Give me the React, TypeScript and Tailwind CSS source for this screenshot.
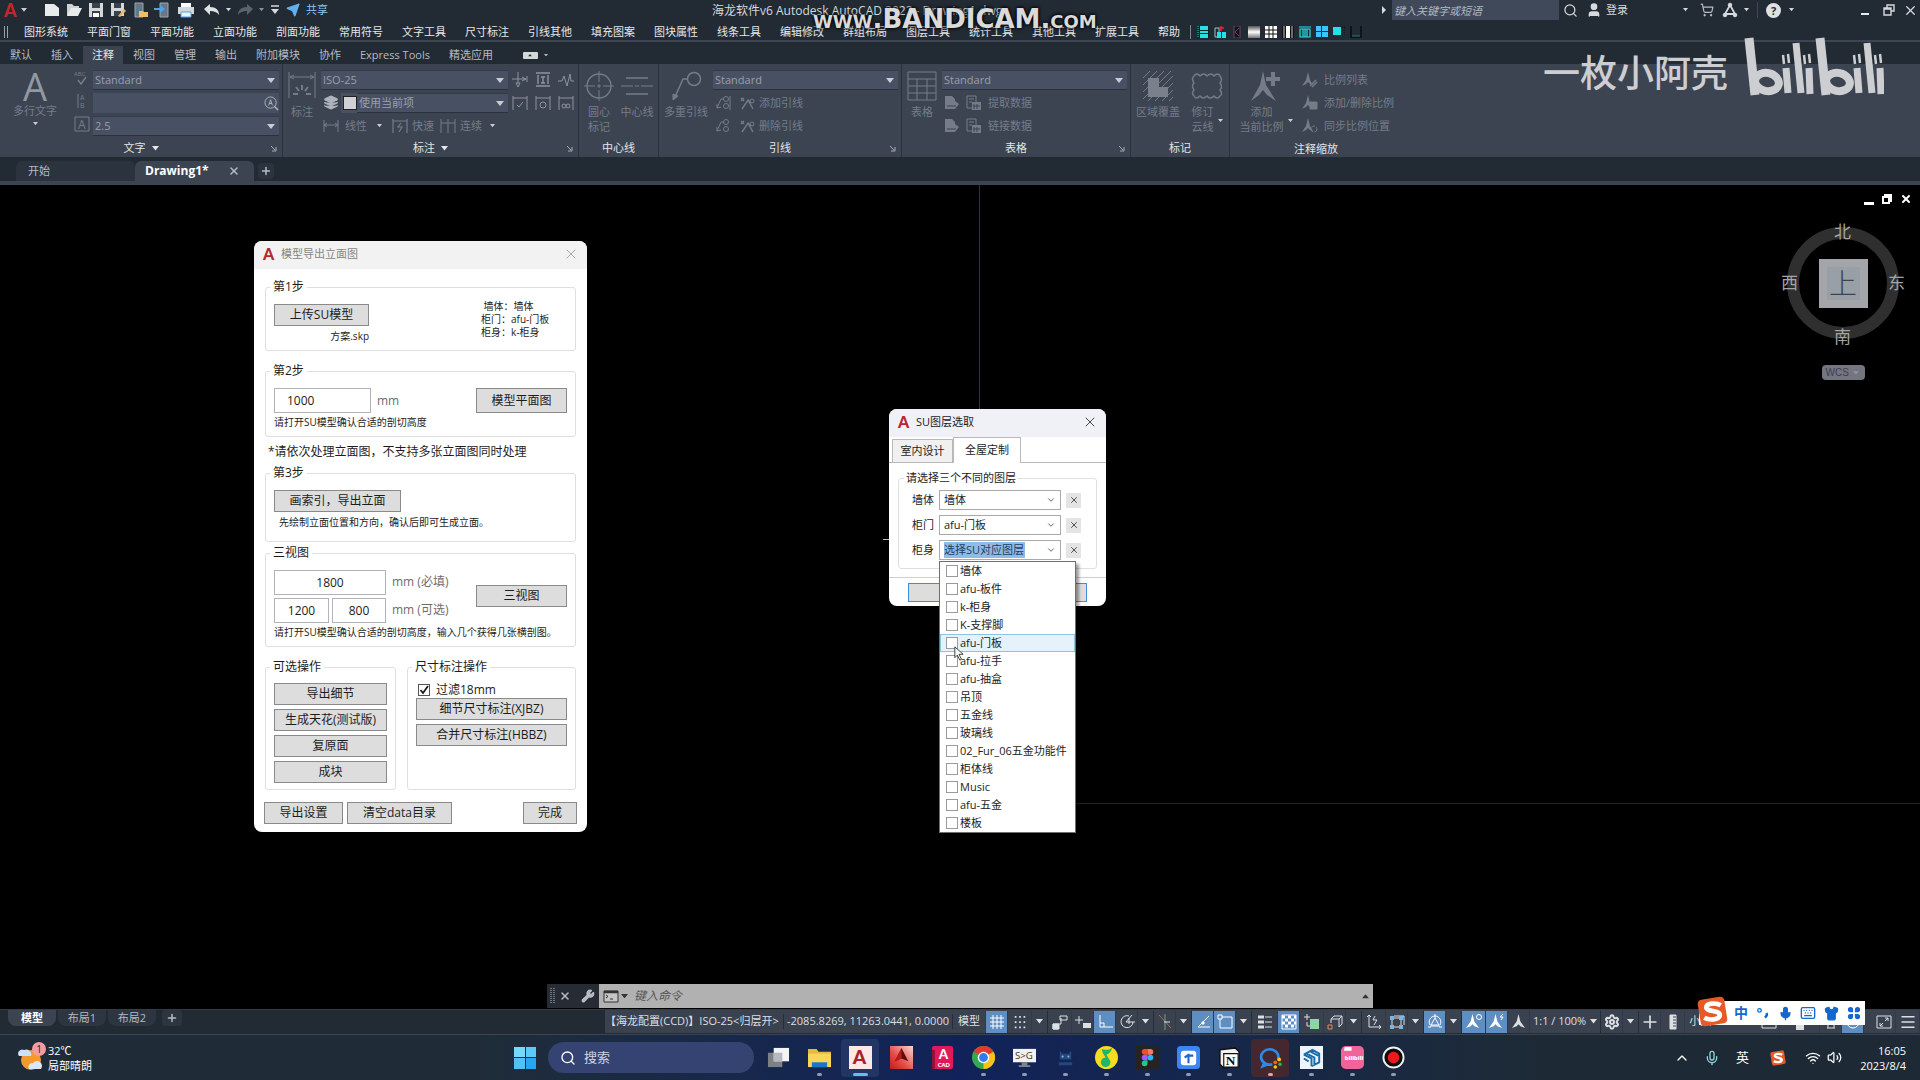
import type { ReactNode } from 'react';
import {
  Search, Wrench, ShoppingCart, User, Settings, Mic, Wifi, Volume2, ChevronUp, ChevronDown,
  X, Plus, Keyboard, Shirt, Maximize, Menu, Send, Layers,
} from 'lucide-react';

const FONT = "font-['Open_Sans','Noto_Sans_CJK_SC',sans-serif]";

const menus = [
  '图形系统', '平面门窗', '平面功能', '立面功能', '剖面功能', '常用符号', '文字工具', '尺寸标注', '引线其他', '填充图案',
  '图块属性', '线条工具', '编辑修改', '群组布局', '图层工具', '统计工具', '其他工具', '扩展工具', '帮助',
];

const ribbonTabs = ['默认', '插入', '注释', '视图', '管理', '输出', '附加模块', '协作', 'Express Tools', '精选应用'];

const layers = [
  '墙体', 'afu-板件', 'k-柜身', 'K-支撑脚', 'afu-门板', 'afu-拉手', 'afu-抽盒', '吊顶', '五金线', '玻璃线',
  '02_Fur_06五金功能件', '柜体线', 'Music', 'afu-五金', '楼板',
];

/* ---------- small helpers ---------- */

function Ico({ children, className = 'size-4', box = 16 }: { children: ReactNode; className?: string; box?: number }) {
  return (
    <svg viewBox={`0 0 ${box} ${box}`} className={`shrink-0 ${className}`} fill="none" stroke="currentColor" strokeWidth="1" aria-hidden="true">
      {children}
    </svg>
  );
}

function Caret({ className = 'w-2' }: { className?: string }) {
  return (
    <svg viewBox="0 0 8 5" className={`shrink-0 ${className}`} fill="currentColor" aria-hidden="true">
      <path d="M0 0h8L4 5z" />
    </svg>
  );
}

function Combo({ label, value, className = '' }: { label: string; value: string; className?: string }) {
  return (
    <div className={`flex h-5 items-center border-y border-b-[#2b323d] border-t-[#333b48] bg-[#485164] pr-1 ${className}`}>
      <select aria-label={label} className="h-full min-w-0 flex-1 appearance-none bg-transparent px-0.5 text-[11px] text-[#999fa9] outline-none">
        <option>{value}</option>
      </select>
      <Caret className="w-2 text-[#c9ccd1]" />
    </div>
  );
}

function Panel({ title, width, caret, arrow, children }: { title: string; width: string; caret?: boolean; arrow?: boolean; children: ReactNode }) {
  return (
    <section className={`flex shrink-0 flex-col border-r border-[#2a313c] ${width}`}>
      <div className="flex h-[76px] items-start pt-1.5 text-[#757c88]">{children}</div>
      <div className="flex h-[17px] items-center px-1 text-[11px] text-[#e3e5e8]">
        <h2 className="flex flex-1 items-center justify-center gap-1.5 pl-2">
          {title}
          {caret && <Caret className="w-[7px]" />}
        </h2>
        {arrow ? (
          <Ico className="size-2 text-[#a8adb5]" box={8}>
            <path d="M1 1l4 4M6 2v4H2" />
          </Ico>
        ) : (
          <span className="w-2" />
        )}
      </div>
    </section>
  );
}

function BigTool({ label, width, children, caret }: { label: string[]; width: string; children: ReactNode; caret?: boolean }) {
  return (
    <button className={`flex shrink-0 flex-col items-center ${width}`}>
      <span className="flex h-8 items-center justify-center">{children}</span>
      <span className="mt-0.5 flex items-end text-[11px] leading-[15px]">
        <span className="whitespace-nowrap">
          {label.map((l) => (
            <span key={l} className="block text-center">{l}</span>
          ))}
        </span>
        {caret && <Caret className="mb-3 ml-1 w-[5px] text-[#c9ccd1]" />}
      </span>
    </button>
  );
}

function ScaleMark({ className = 'size-4' }: { className?: string }) {
  return (
    <Ico className={className}>
      <path d="M8 0l2 8 5 7-5-2-2-2-2 2-5 2 5-7z" fill="currentColor" stroke="none" />
    </Ico>
  );
}

/* ---------- top of the window ---------- */

function TitleBar() {
  return (
    <header className="flex h-5 items-center text-[11px] text-[#d6d9dd]">
      <div className="flex w-[712px] shrink-0 items-center pl-1">
        <button className="flex w-7 items-center gap-1 font-['Lato'] text-lg leading-5 font-black text-[#c2262b]" aria-label="菜单">
          A <Caret className="w-1.5 text-[#c9ccd1]" />
        </button>
        <div className="ml-3 flex items-center gap-1.5">
          <Ico><path d="M1 2h9l5 4v8H1z" fill="#e8eaec" stroke="none" /></Ico>
          <Ico><path d="M1 14V2h5l2 2h5v2" fill="#cfd2d5" stroke="none" /><path d="M1 14L5 6h11l-4 8z" fill="#e8eaec" stroke="none" /></Ico>
          <Ico><path d="M1 1h14v14H1z" fill="#d5d8db" stroke="none" /><path d="M4 1h8v5H4zM4 9h8v6H4z" fill="#3a424e" stroke="none" /><path d="M5 11h6v4H5z" fill="#fff" stroke="none" /></Ico>
          <Ico><path d="M1 1h13v13H1z" fill="#d5d8db" stroke="none" /><path d="M4 1h7v5H4zM4 9h7v5H4z" fill="#3a424e" stroke="none" /><path d="M8 14l6-7 2 2-6 6z" fill="#e7b768" stroke="none" /></Ico>
          <Ico><path d="M3 1h8v14H3z" fill="#687787" stroke="#9aa5b0" /><path d="M7 9h4l1 1h4v5H7z" fill="#edbd68" stroke="none" /></Ico>
          <Ico><path d="M6 1h8v14H6z" fill="#687787" stroke="#9aa5b0" /><path d="M0 6h6V3l5 4-5 4V8H0z" fill="#4fa3e8" stroke="none" /></Ico>
          <Ico className="ml-0.5 size-4"><path d="M3 1h10v4H3z" fill="#fff" stroke="none" /><path d="M0 5h16v7H0z" fill="#d5d8db" stroke="none" /><path d="M3 10h10v5H3z" fill="#e8f4ff" stroke="#4fa3e8" /></Ico>
          <Ico className="ml-1 size-4"><path d="M6 2v3c6 0 9 3 9 8-2-3-5-4-9-4v4L0 7z" fill="#dfe2e5" stroke="none" /></Ico>
          <Caret className="w-[5px]" />
          <Ico className="size-4 text-[#59626f]"><path d="M10 2v3c-6 0-9 3-9 8 2-3 5-4 9-4v4l6-6z" fill="currentColor" stroke="none" /></Ico>
          <Caret className="w-[5px] text-[#8a919b]" />
          <Ico className="size-2.5" box={10}><path d="M1 1h8" strokeWidth="1.5" /><path d="M1 4h8L5 9z" fill="currentColor" stroke="none" /></Ico>
        </div>
        <a href="#share" className="ml-1.5 flex items-center gap-1.5 text-[#8ec5f2]">
          <Send className="size-[14px] fill-[#62b1ee] text-[#62b1ee]" />
          共享
        </a>
      </div>
      <h1 className="pt-0.5 text-xs whitespace-nowrap">海龙软件v6 Autodesk AutoCAD 2022 - Drawing1.dwg</h1>
      <div className="ml-auto flex h-full items-center pr-0.5">
        <span className="mr-1.5 border-y-4 border-l-4 border-y-transparent border-l-[#d6d9dd]" />
        <input aria-label="搜索" placeholder="键入关键字或短语" className="h-full w-[167px] bg-[#3f495a] px-0.5 text-[11px] italic outline-none placeholder:text-[#b3b8c0]" />
        <Search className="ml-1 size-[15px]" />
        <button className="ml-2 flex items-center gap-1">
          <User className="size-4 fill-current" />
          登录
        </button>
        <Caret className="ml-[55px] w-[5px]" />
        <ShoppingCart className="ml-3 size-[14px] text-[#b9bdc3]" />
        <Ico className="ml-2 size-4"><path d="M8 3l5 9H3z" strokeWidth="1.8" /><circle cx="8" cy="3" r="1.8" fill="currentColor" /><circle cx="13" cy="13" r="1.8" fill="currentColor" /><circle cx="3" cy="13" r="1.8" fill="currentColor" /></Ico>
        <Caret className="ml-1.5 w-[5px]" />
        <span className="ml-2 h-4 w-px bg-[#3f4854]" />
        <button className="ml-2 size-[15px] rounded-full bg-[#dfe2e5] text-[11px] leading-[15px] font-bold text-[#222a33]" aria-label="帮助">?</button>
        <Caret className="ml-2 w-[5px]" />
        <button aria-label="最小化" className="ml-[67px] h-2.5 w-2 border-b-2 border-[#e8eaec]" />
        <button aria-label="还原" className="ml-3.5">
          <Ico className="size-3" box={12}><path d="M4 4V1h7v6H8M1 4h7v7H1zM1 5h7" strokeWidth="1.4" /></Ico>
        </button>
        <button aria-label="关闭" className="ml-2"><X className="size-[15px]" /></button>
      </div>
    </header>
  );
}

function MenuBar() {
  return (
    <nav className="flex h-[22px] items-center border-b-2 border-[#3d4552] pt-1 pl-1 text-[11px] whitespace-nowrap text-[#e6e8ea]">
      <span className="h-3 w-1 border-x border-[#9aa0a8]" />
      <ul className="ml-4 flex gap-[19px]">
        {menus.map((m) => (
          <li key={m}><a href="#menu">{m}</a></li>
        ))}
      </ul>
      <span className="ml-2.5 h-3.5 w-px bg-[#7b838e]" />
      <div className="ml-1.5 flex gap-[5px] text-[#27e0e6]">
        <Ico className="size-3" box={12}><path d="M0 0h12v12H0z" fill="#062226" stroke="none" /><path d="M3 0h8v4H3zM3 5h8v2H3zM3 8h8v4H3z" fill="currentColor" stroke="none" /><path d="M1 0v12" strokeDasharray="1 1" /></Ico>
        <Ico className="size-3" box={12}><path d="M1 2h4v9H1z" stroke="#8cc" /><path d="M3 6h4v6H3zM8 6h4v6H8z" fill="currentColor" stroke="none" /><path d="M7 0v5M5 2h5" stroke="#e23" strokeWidth="1.6" /></Ico>
        <Ico className="size-3" box={12}><path d="M3 0h6v12H3z" fill="#161020" stroke="#6b4561" /><path d="M8 2L4 6l4 4" stroke="#6b4561" /></Ico>
        <span className="size-3 bg-linear-to-b from-[#555] via-white to-[#777]" />
        <Ico className="size-3" box={12}><path d="M0 0h12v12H0z" fill="#fff" stroke="none" /><path d="M4 0v12M8 0v12M0 4h12M0 8h12" stroke="#111" /></Ico>
        <Ico className="size-3" box={12}><path d="M0 0h12v12H0z" fill="#111" stroke="none" /><path d="M2 0v12M10 0v12" stroke="#ccc" /><path d="M4 0h4v12H4z" fill="#fff" stroke="none" /></Ico>
        <Ico className="size-3" box={12}><path d="M0 1h12M1 3h10v8H1zM4 3v8M6 3v8M8 3v8" strokeWidth="1.2" /></Ico>
        <Ico className="size-3" box={12}><path d="M0 0h5v5H0zM6 0h6v5H6zM0 6h5v5H0zM6 6h6v5H6z" fill="#38c6ff" stroke="none" /></Ico>
        <Ico className="size-3" box={12}><path d="M0 1h8v8H0z" fill="currentColor" stroke="none" /><path d="M9 1h3v9" stroke="#111" strokeDasharray="1 1" /></Ico>
        <Ico className="size-3" box={12}><path d="M1 0v11h10V0" stroke="#0b0e12" strokeWidth="1.5" /><path d="M2 10h8" stroke="#1c7f83" /></Ico>
      </div>
    </nav>
  );
}

function Ribbon() {
  return (
    <div className="bg-[#3c4452]">
      <nav className="flex h-[22px] items-end gap-px bg-[#222a33] pl-px text-[11px] whitespace-nowrap text-[#b6bbc2]">
        {ribbonTabs.map((t) => (
          <button key={t} className={`h-[18px] px-[9px] leading-[18px] ${t === '注释' ? 'bg-[#3c4452] text-[#e8eaec]' : ''}`}>{t}</button>
        ))}
        <span className="ml-5 flex h-[18px] items-center gap-1.5">
          <span className="flex h-[7px] w-[15px] items-center justify-center rounded-[1px] bg-[#d5d8db]">
            <Caret className="w-1 rotate-180 text-[#222a33]" />
          </span>
          <Caret className="w-1" />
        </span>
      </nav>

      <div className="flex h-[93px]">
        <Panel title="文字" width="w-[283px]" caret arrow>
          <button className="flex w-[70px] shrink-0 flex-col items-center">
            <span className="flex h-8 items-center text-[38px] leading-8 text-[#9298a2]">A</span>
            <span className="mt-0.5 text-[11px] leading-[14px]">多行文字</span>
            <Caret className="mt-1 w-[5px] text-[#c9ccd1]" />
          </button>
          <div className="flex w-[23px] shrink-0 flex-col items-center gap-[7px]">
            <Ico><text x="0" y="6" fontSize="6" fill="currentColor" stroke="none">ABC</text><path d="M4 10l3 4 5-7" strokeWidth="1.5" /></Ico>
            <Ico><path d="M4 1v14" /><text x="6" y="7" fontSize="7" fill="currentColor" stroke="none">A</text><text x="6" y="15" fontSize="7" fill="currentColor" stroke="none">B</text></Ico>
            <Ico><path d="M1 1h14v14H1z" /><text x="4" y="13" fontSize="12" fill="currentColor" stroke="none">A</text></Ico>
          </div>
          <div className="flex flex-1 flex-col gap-[3px] pr-[3px]">
            <Combo label="文字样式" value="Standard" />
            <div className="flex h-5 items-center bg-[#485164]">
              <input aria-label="查找文字" className="h-full min-w-0 flex-1 bg-transparent px-1 text-[11px] outline-none" />
              <Ico className="size-[15px] text-[#b0b5bd]"><circle cx="7" cy="7" r="6" /><path d="M11 11l4 4" strokeWidth="1.6" /><path d="M5 10l2-6 2 6M5.500 8h3" /></Ico>
            </div>
            <Combo label="文字高度" value="2.5" />
          </div>
        </Panel>

        <Panel title="标注" width="w-[296px]" caret arrow>
          <BigTool label={['标注']} width="w-[38px]">
            <Ico className="size-8" box={32}><path d="M3 2v26M29 2v26M4 7h24M4 7l4-2M4 7l4 2M28 7l-4-2M28 7l-4 2" /><path d="M16 15v5M10 17l3 4M22 17l-3 4M7 24h5M20 24h5" strokeWidth="2" /></Ico>
          </BigTool>
          <div className="flex flex-1 flex-col gap-[3px]">
            <Combo label="标注样式" value="ISO-25" />
            <div className="flex">
              <Layers className="mt-0.5 w-5 shrink-0 text-[#aeb3bb]" size={15} fill="currentColor" />
              <div className="flex min-w-0 flex-1 items-center bg-[#485164] pl-0.5">
                <span className="h-3.5 w-3.5 shrink-0 border border-[#222] bg-[#d0d2d6]" />
                <Combo label="标注图层" value="使用当前项" className="min-w-0 flex-1 border-0" />
              </div>
            </div>
            <div className="flex h-5 items-center text-[11px]">
              <Ico className="mx-0.5 size-4"><path d="M1 2v12M15 2v12M1 7h14M1 7l3-2M1 7l3 2M15 7l-3-2M15 7l-3 2" /></Ico>
              <span className="mx-1">线性</span>
              <Caret className="mx-1.5 w-[5px] text-[#c9ccd1]" />
              <Ico className="mx-1 size-4"><path d="M1 1v14M15 1v14M1 3h14M9 5L6 9h4l-3 5" strokeWidth="1.2" /></Ico>
              <span className="mr-1.5">快速</span>
              <Ico className="mr-1 size-4"><path d="M1 1v14M8 1v14M15 1v14M1 5h14" /></Ico>
              <span>连续</span>
              <Caret className="ml-2 w-[5px] text-[#c9ccd1]" />
            </div>
          </div>
          <div className="grid w-[70px] shrink-0 grid-cols-3 justify-items-center gap-y-[7px] pt-0.5 text-[#8e949e]">
            <Ico><path d="M6 0v11M0 7h14M6 11l-2 0 2 4 2-4zM10 5l4 2-4 2M15 4v6" /></Ico>
            <Ico><path d="M1 1h14M1 14h14M3 3v9M13 3v9M6 5h4M8 5v6M6 11h4" strokeWidth="1.4" /></Ico>
            <Ico><path d="M0 9h4l2-5 3 10 3-12 1 7h3" /></Ico>
            <Ico><path d="M1 1v14M15 1v14M1 3h14M5 10l2 2 4-5" /></Ico>
            <Ico><path d="M1 1v14M15 1v14M1 3h14" /><circle cx="8" cy="10" r="3" /></Ico>
            <Ico><path d="M1 1v14M15 1v14M1 3h14" /><circle cx="6" cy="11" r="2" /><circle cx="10" cy="11" r="2" /></Ico>
          </div>
        </Panel>

        <Panel title="中心线" width="w-20">
          <BigTool label={['圆心', '标记']} width="w-10">
            <Ico className="size-8" box={32}><circle cx="16" cy="16" r="12" strokeWidth="1.4" /><path d="M16 1v30M1 16h30" strokeDasharray="11 2 4 2" /></Ico>
          </BigTool>
          <BigTool label={['中心线']} width="w-9">
            <Ico className="size-8" box={32}><path d="M5 8h22M5 24h22" strokeWidth="1.4" /><path d="M0 16h12M14 16h4M20 16h12" /></Ico>
          </BigTool>
        </Panel>

        <Panel title="引线" width="w-[243px]" arrow>
          <BigTool label={['多重引线']} width="w-[54px]">
            <Ico className="size-8" box={32}><circle cx="24" cy="9" r="6.500" strokeWidth="1.5" /><path d="M17 9h-4L5 27" strokeWidth="1.5" /><path d="M3 30l0-6 5 2z" fill="currentColor" /></Ico>
          </BigTool>
          <div className="flex flex-1 flex-col gap-[3px] pr-[3px] text-[11px]">
            <Combo label="引线样式" value="Standard" />
            {['添加引线', '删除引线'].map((t) => (
              <div key={t} className="flex h-5 items-center gap-2 pl-0.5">
                <Ico><path d="M2 13L6 4h3M2 13l0-4M2 13l4-1" /><circle cx="11" cy="4" r="2.500" /><circle cx="11" cy="11" r="2.500" />{t === '添加引线' && <path d="M15 1v14" />}</Ico>
                <Ico><path d="M2 3l3 3M5 3L2 6M3 14L9 5l5 9M9 5l3 3" strokeWidth="1.4" /><circle cx="13" cy="6" r="2" /></Ico>
                <button className="-ml-1">{t}</button>
              </div>
            ))}
          </div>
        </Panel>

        <Panel title="表格" width="w-[229px]" arrow>
          <BigTool label={['表格']} width="w-10">
            <Ico className="size-8" box={32}><path d="M2 2h28v28H2zM2 9h28M2 16h28M2 23h28M11 9v21M21 9v21" /></Ico>
          </BigTool>
          <div className="flex flex-1 flex-col gap-[3px] pr-[3px] text-[11px]">
            <Combo label="表格样式" value="Standard" />
            {['提取数据', '链接数据'].map((t) => (
              <div key={t} className="flex h-5 items-center gap-1.5 pl-0.5">
                <Ico><path d="M1 1h7l3 3v2l4 3-4 5H1z" fill="currentColor" stroke="none" /><path d="M3 11h9" stroke="#3c4452" /></Ico>
                <Ico><path d="M1 1h9v12H1zM3 4h5M3 7h3" /><path d="M6 7h9v8H6z" fill="currentColor" stroke="none" /><path d="M8 9v5M11 9v5M7 11h7" stroke="#3c4452" /></Ico>
                <button>{t}</button>
              </div>
            ))}
          </div>
        </Panel>

        <Panel title="标记" width="w-[99px]">
          <BigTool label={['区域覆盖']} width="w-[54px]">
            <Ico className="size-8" box={32}><path d="M1 8l7-7M1 15L15 1M1 22L22 1M1 29L29 1M6 31L31 6M13 31l18-18M20 31l11-11M27 31l4-4" /><path d="M6 8h11v9h9v10H6z" fill="#7b818c" stroke="none" /></Ico>
          </BigTool>
          <BigTool label={['修订', '云线']} width="w-11" caret>
            <Ico className="size-8" box={32}><path d="M3 6q3-4 6 0 4-4 7 0 4-4 7 0 4-4 6 0 3 4 0 7 3 4 0 7 3 4 0 6-3 4-6 0-4 4-7 0-4 4-7 0-4 4-6 0-3-3 0-6-3-4 0-7-3-4 0-7z" strokeWidth="1.4" /></Ico>
          </BigTool>
        </Panel>

        <section className="flex w-[172px] shrink-0 flex-col">
          <div className="flex h-[76px] items-start pt-1.5 text-[#757c88]">
            <BigTool label={['添加', '当前比例']} width="w-[72px]" caret>
              <Ico className="size-8" box={32}><path d="M13 1l3 14 10 16-9-6-4-5-4 5-8 6 9-16z" fill="currentColor" stroke="none" /><path d="M23 2v14M16 9h14" strokeWidth="4" /></Ico>
            </BigTool>
            <div className="flex flex-col gap-[3px] text-[11px] whitespace-nowrap">
              {['比例列表', '添加/删除比例', '同步比例位置'].map((t) => (
                <button key={t} className="flex h-5 items-center gap-1.5">
                  <Ico>
                    <path d="M6 0l2 8 3 5-3-1-2-2-2 2-4 2 4-6z" fill="currentColor" stroke="none" />
                    {t === '比例列表' && <path d="M8 14l6-6M10 15l5-5" strokeWidth="1.5" />}
                    {t === '添加/删除比例' && <path d="M8 7h7v7H8zM8 9h7M8 12h7" fill="currentColor" />}
                    {t === '同步比例位置' && <circle cx="12" cy="11" r="3" strokeDasharray="4 1.500" />}
                  </Ico>
                  {t}
                </button>
              ))}
            </div>
          </div>
          <h2 className="h-[17px] text-center text-[11px] leading-[17px] text-[#e3e5e8]">注释缩放</h2>
        </section>
      </div>
    </div>
  );
}

function FileTabs() {
  return (
    <nav className="flex h-7 items-end border-b-4 border-[#3c4452] bg-[#222a33] pl-4 text-[11px] text-[#b6bbc2]">
      <button className="h-5 w-[119px] rounded-t-md bg-[#2b333f] px-3 text-left">开始</button>
      <div className="flex h-5 w-[119px] items-center justify-between rounded-t-md bg-[#3c4452] pr-3.5 pl-2.5 text-xs font-bold text-white">
        Drawing1*
        <button aria-label="关闭图形"><X className="size-3 text-[#b6bbc2]" strokeWidth={3} /></button>
      </div>
      <button aria-label="新图形" className="mb-0.5 ml-1 flex size-4 items-center justify-center rounded-sm bg-[#2b333f]"><Plus className="size-3" strokeWidth={3} /></button>
    </nav>
  );
}

/* ---------- dialogs on the drawing ---------- */

function Btn({ children, className = '' }: { children: ReactNode; className?: string }) {
  return (
    <button className={`h-[22px] border border-[#8a8a8a] bg-[#dddddd] text-xs leading-5 whitespace-nowrap text-[#1c1c1c] ${className}`}>{children}</button>
  );
}

function Num({ label, value, className }: { label: string; value: string; className: string }) {
  return <input aria-label={label} defaultValue={value} className={`h-[25px] border border-[#b0b3b8] bg-white text-xs text-[#1c1c1c] outline-none ${className}`} />;
}

function Group({ title, className = '', children }: { title: string; className?: string; children: ReactNode }) {
  return (
    <fieldset className={`min-w-0 rounded-[3px] border border-[#dfdfdf] ${className}`}>
      <legend className="-ml-1 px-[3px] text-xs leading-4">{title}</legend>
      {children}
    </fieldset>
  );
}

function ExportDialog() {
  return (
    <section className="absolute top-14 left-[254px] w-[333px] overflow-hidden rounded-lg bg-white text-xs text-[#1c1c1c]">
      <header className="flex h-7 items-center bg-[#f2f2f2] pr-2 pb-0.5 pl-[9px] text-[#858585]">
        <span className="w-[18px] font-['Lato'] text-base leading-5 font-black text-[#b7272d]">A</span>
        <h2 className="text-[11px]">模型导出立面图</h2>
        <button aria-label="关闭" className="ml-auto"><X className="size-4" strokeWidth={1} /></button>
      </header>

      <div className="px-[11px] pt-2.5 pb-2">
        <Group title="第1步" className="h-[72px] px-2">
          <div className="flex justify-between pt-[5px]">
            <div className="mt-1 flex flex-col">
              <Btn className="w-[95px]">上传SU模型</Btn>
              <span className="mt-0.5 text-right text-[10px] leading-4">方案.skp</span>
            </div>
            <p className="w-[86px] text-[10px] leading-[13px]">
              &nbsp;墙体：墙体<br />柜门：afu-门板<br />柜身：k-柜身
            </p>
          </div>
        </Group>

        <Group title="第2步" className="mt-3 h-[74px] px-2">
          <div className="flex items-center pt-[9px]">
            <Num label="剖切高度" value="1000" className="w-[97px] pl-3" />
            <span className="ml-1.5 text-[#6d6d6d]">mm</span>
            <Btn className="ml-auto h-[25px] w-[91px]">模型平面图</Btn>
          </div>
          <p className="mt-px text-[10px] leading-4">请打开SU模型确认合适的剖切高度</p>
        </Group>

        <p className="mt-[7px] pl-[3px] leading-4 whitespace-nowrap">*请依次处理立面图，不支持多张立面图同时处理</p>

        <Group title="第3步" className="mt-[5px] h-[77px] px-2">
          <Btn className="mt-[9px] block w-[127px]">画索引，导出立面</Btn>
          <p className="mt-0.5 pl-[5px] text-[10px] leading-4">先绘制立面位置和方向，确认后即可生成立面。</p>
        </Group>

        <Group title="三视图" className="mt-[3px] h-[102px] px-2">
          <div className="flex items-center pt-[7px]">
            <div className="flex w-28 flex-col gap-[3px]">
              <Num label="高度一" value="1800" className="w-full text-center" />
              <div className="flex gap-[3px]">
                <Num label="高度二" value="1200" className="w-[55px] text-center" />
                <Num label="高度三" value="800" className="w-[54px] text-center" />
              </div>
            </div>
            <div className="ml-1.5 text-[#6d6d6d]">
              <p className="leading-7">mm (必填)</p>
              <p className="leading-7">mm (可选)</p>
            </div>
            <Btn className="ml-auto w-[91px]">三视图</Btn>
          </div>
          <p className="text-[10px] leading-4 whitespace-nowrap">请打开SU模型确认合适的剖切高度，输入几个获得几张横剖图。</p>
        </Group>

        <div className="mt-3 flex gap-[11px]">
          <Group title="可选操作" className="h-[131px] w-[131px] px-2">
            <div className="flex flex-col gap-1 pt-2">
              <Btn>导出细节</Btn>
              <Btn>生成天花(测试版)</Btn>
              <Btn>复原面</Btn>
              <Btn>成块</Btn>
            </div>
          </Group>
          <Group title="尺寸标注操作" className="h-[131px] flex-1 px-2">
            <label className="mt-[7px] flex items-center gap-1.5 leading-4">
              <span className="relative ml-0.5 size-3">
                <input type="checkbox" defaultChecked className="peer block size-3 appearance-none border border-[#555] bg-white" />
                <Ico className="pointer-events-none absolute inset-0 size-3" box={12}><path d="M2.500 6l2.500 3 5-7" strokeWidth="1.8" /></Ico>
              </span>
              过滤18mm
            </label>
            <div className="flex flex-col gap-1">
              <Btn>细节尺寸标注(XJBZ)</Btn>
              <Btn>合并尺寸标注(HBBZ)</Btn>
            </div>
          </Group>
        </div>

        <footer className="-mx-px mt-3 flex gap-1">
          <Btn className="w-[79px]">导出设置</Btn>
          <Btn className="w-[105px]">清空data目录</Btn>
          <Btn className="ml-auto w-[54px]">完成</Btn>
        </footer>
      </div>
    </section>
  );
}

function LayerField({ label, value, selected }: { label: string; value: string; selected?: boolean }) {
  return (
    <div className="flex h-5 items-center">
      <label htmlFor={label} className="w-[27px] shrink-0">{label}</label>
      <div className="flex h-5 w-[122px] items-center justify-between border border-[#a9a9a9] bg-white px-1">
        <select id={label} className={`h-4 appearance-none text-[11px] leading-4 outline-none ${selected ? 'bg-[#8fbbe6] text-[#1d3f66]' : 'flex-1'}`}>
          <option>{value}</option>
        </select>
        <ChevronDown className="size-2.5 shrink-0 text-[#444]" />
      </div>
      <button aria-label={`清除${label}`} className="ml-[5px] flex size-[15px] items-center justify-center bg-[#e4e4e4]"><X className="size-2.5 text-[#333]" /></button>
    </div>
  );
}

function LayerDialog() {
  return (
    <>
      <section className="absolute top-56 left-[889px] w-[217px] overflow-hidden rounded-lg bg-white text-[11px] text-[#1c1c1c]">
        <header className="flex h-7 items-center bg-[#eff1f7] pr-2 pb-0.5 pl-[9px]">
          <span className="w-[18px] font-['Lato'] text-base leading-5 font-black text-[#b7272d]">A</span>
          <h2>SU图层选取</h2>
          <button aria-label="关闭" className="ml-auto"><X className="size-4" strokeWidth={1.2} /></button>
        </header>
        <div className="flex h-[26px] items-end border-b border-[#b9b9b9] px-[3px]">
          <button className="h-[23px] w-[61px] border border-b-0 border-[#b9b9b9] bg-[#f0f0f0]">室内设计</button>
          <button className="-mb-px h-[26px] w-[68px] border border-b-0 border-[#b9b9b9] bg-white">全屋定制</button>
        </div>
        <fieldset className="mx-[9px] mt-[7px] h-[99px] rounded-[3px] border border-[#dfdfdf] pl-[13px]">
          <legend className="-ml-2 px-0.5 leading-4">请选择三个不同的图层</legend>
          <div className="flex flex-col gap-[5px] pt-1">
            <LayerField label="墙体" value="墙体" />
            <LayerField label="柜门" value="afu-门板" />
            <LayerField label="柜身" value="选择SU对应图层" selected />
          </div>
        </fieldset>
        <footer className="mt-2 border-t border-[#cfcfcf] px-[19px] pt-[5px] pb-1">
          <button aria-label="确定" className="block h-[19px] w-full border border-[#3f8fd0] bg-[#dddddd]" />
        </footer>
      </section>

      <ul className="absolute top-[376px] left-[939px] w-[137px] border border-[#6e6e6e] bg-white text-[11px] text-[#1c1c1c] shadow-[3px_3px_3px_#00000066]">
        {layers.map((l) => (
          <li key={l} className={`h-[18px] border ${l === 'afu-门板' ? 'border-[#8cc3dd] bg-[#e3f2fb]' : 'border-transparent'}`}>
            <label className="flex h-4 items-center gap-0.5 pl-[5px] whitespace-nowrap">
              <input type="checkbox" className="size-3 appearance-none border border-[#9a9a9a] bg-white" />
              {l}
            </label>
          </li>
        ))}
      </ul>

      <svg viewBox="0 0 12 18" className="absolute top-[461px] left-[954px] h-[15px] w-2.5" aria-hidden="true">
        <path d="M1 1v13l3-3 3 6 2-1-3-6h5z" fill="#fff" stroke="#222" />
      </svg>
    </>
  );
}

function ViewCube() {
  return (
    <>
      <div className="absolute top-2 right-2 flex items-center gap-2 text-white">
        <button aria-label="最小化图形" className="mt-2 h-[3px] w-2.5 bg-current" />
        <button aria-label="还原图形"><Ico className="size-2.5" box={10}><path d="M3 2V1h6v6H8M1 3h6v6H1z" strokeWidth="2" /></Ico></button>
        <button aria-label="关闭图形窗口"><X className="size-3" strokeWidth={4} /></button>
      </div>
      <div className="absolute top-9 right-[15px] flex w-[124px] flex-col items-center text-[17px] leading-6 text-[#a5a5a5]">
        <div className="relative flex h-[124px] w-full items-center justify-between">
          <span className="absolute inset-[6px] rounded-full border-[12px] border-[#2f2f2f]" />
          <span className="absolute -top-px left-[53px]">北</span>
          <span className="absolute -bottom-1 left-[53px]">南</span>
          <span className="relative">西</span>
          <button className="relative flex size-[49px] items-center justify-center border-8 border-[#a3a5a8] bg-[#989fa6] text-[28px] leading-8 font-light text-[#3e434b]">上</button>
          <span className="relative">东</span>
        </div>
        <button className="mt-5 flex h-[15px] w-[43px] items-center gap-1 rounded bg-[#73757f] pl-1 font-['Liberation_Sans'] text-[10px] leading-[15px] text-[#3c3d52]">
          WCS <Caret className="w-1.5 text-[#8d90a0]" />
        </button>
      </div>
    </>
  );
}

/* ---------- bottom bars ---------- */

function CommandLine() {
  return (
    <div className="absolute bottom-px left-[547px] flex h-6 w-[826px] items-center bg-[#262b34] text-[#b9bdc3]">
      <Ico><path d="M4 0v16M7 0v16" strokeDasharray="1 1" /></Ico>
      <button aria-label="关闭命令行" className="-ml-1"><X className="size-3" strokeWidth={3} /></button>
      <Wrench className="ml-2.5 size-3.5 fill-current" />
      <div className="ml-1 flex h-full flex-1 items-center bg-[#b1b1b1] pr-1 pl-1 text-[#333]">
        <Ico><path d="M1 3h14v11H1z" fill="#c6c6c6" /><path d="M1 4h14" strokeWidth="2.500" /><path d="M3 7l2 1.500L3 10M7 11h3" /></Ico>
        <Caret className="ml-0.5 w-[7px]" />
        <input aria-label="命令" placeholder="键入命令" className="ml-1.5 flex-1 bg-transparent text-xs italic outline-none placeholder:text-[#555]" />
        <Caret className="w-[7px] rotate-180" />
      </div>
    </div>
  );
}

function Cell({ children, on, w = 'w-[22px]' }: { children: ReactNode; on?: boolean; w?: string }) {
  return (
    <button className={`flex h-[22px] shrink-0 items-center justify-center border-r border-[#323a47] ${w} ${on ? 'bg-[#5f8ec2] text-white' : ''}`}>{children}</button>
  );
}

function Drop() {
  return (
    <button aria-label="更多" className="flex h-[22px] w-4 shrink-0 items-center justify-center border-r border-[#262d37]"><Caret className="w-[7px]" /></button>
  );
}

function StatusBar() {
  return (
    <div className="flex h-[26px] items-start border-t border-b border-t-[#343c48] border-b-[#3d4552] bg-[#222a33] text-xs whitespace-nowrap text-[#dcdfe3]">
      <div className="flex h-4 w-[605px] shrink-0 items-center gap-0.5 pl-2 text-[11px] leading-4 text-[#b6bbc2]">
        <button className="w-12 rounded-b-lg bg-[#3c4452] font-bold text-white">模型</button>
        <button className="w-12 rounded-b-lg bg-[#2d3541]">布局1</button>
        <button className="w-12 rounded-b-lg bg-[#2d3541]">布局2</button>
        <button aria-label="新建布局" className="ml-1 flex h-4 w-5 items-center justify-center rounded-sm bg-[#2d3541]"><Plus className="size-3" strokeWidth={3} /></button>
      </div>
      <div className="flex h-[23px] flex-1 items-center overflow-hidden bg-[#3a4250] text-[11px]">
        <span className="w-[179px] shrink-0 border-r border-[#262d37]">【海龙配置(CCD)】ISO-25&lt;归层开&gt;</span>
        <span className="w-[169px] shrink-0 border-r border-[#262d37] text-center">-2085.8269, 11263.0441, 0.0000</span>
        <Cell w="w-[33px]">模型</Cell>
        <Cell on><Ico><path d="M4 1v14M12 1v14M1 4h14M1 12h14M8 1v14M1 8h14" /></Ico></Cell>
        <Cell w="w-6"><Ico className="size-3.5"><path d="M3 1v14M8 1v14M13 1v14" strokeWidth="2" strokeDasharray="2 4" /></Ico></Cell>
        <Drop />
        <Cell w="w-6"><Ico><path d="M1 10h5v5H1zM8 2h7v4H8zM6 10h3V4" /><path d="M1 10h6v5H1z" fill="currentColor" /></Ico></Cell>
        <Cell><Ico><path d="M4 2v8M0 6h8" /><path d="M8 9h8v5H8z" fill="currentColor" stroke="none" /></Ico></Cell>
        <Cell on><Ico><path d="M3 1v12h13M3 9h4v4" /></Ico></Cell>
        <Cell><Ico><path d="M14 8a6 6 0 1 1-4-6M7 8h9M7 8l6-7M10 4v6" /></Ico></Cell>
        <Drop />
        <Cell><Ico><path d="M2 1l12 13" stroke="#a06c68" /><path d="M8 0v16" stroke="#789e83" /><path d="M7 8h6" /></Ico></Cell>
        <Drop />
        <Cell on><Ico><path d="M14 2L3 13h12" /><path d="M7 8h2v2H7z" fill="currentColor" /></Ico></Cell>
        <Cell on><Ico><path d="M3 3h12v11H3z" /><path d="M1 1h4v4H1z" fill="#5f8ec2" /></Ico></Cell>
        <Drop />
        <Cell w="w-[26px]"><Ico><path d="M1 3h6M1 8h6M1 13h6" strokeWidth="3" /><path d="M8 3h7M8 8h7M8 13h7" /></Ico></Cell>
        <Cell on><Ico><path d="M1 1h14v14H1z" /><path d="M1 3h14M1 9h14" strokeWidth="3" strokeDasharray="3 3" /><path d="M4 6h12M4 12h12" strokeWidth="3" strokeDasharray="3 3" /></Ico></Cell>
        <Cell w="w-6"><Ico><path d="M3 0v6M0 3h6M3 8v4h3" /><path d="M6 5h9v10H6z" fill="#8ed6a3" stroke="none" /></Ico></Cell>
        <Cell><Ico><path d="M4 5h8v8M4 5l3-3h8v8l-3 3M12 5l3-3M4 5v4" /><path d="M1 11h4v4H1z" stroke="#dd8a5c" /></Ico></Cell>
        <Drop />
        <Cell w="w-6"><Ico><path d="M3 1v12h12M1 3l2-2 2 2M13 11l2 2-2 2M9 2L7 6h4L8 11" /></Ico></Cell>
        <Cell><Ico><path d="M3 4h9v9H3zM5 2h10v9" /><path d="M1 2h4v4H1zM10 2h4v4h-4zM1 11h4v4H1zM10 11h4v4h-4z" fill="#73b7ec" stroke="none" /></Ico></Cell>
        <Drop />
        <Cell on><Ico><path d="M8 2a6 6 0 0 1 5 9M8 2a6 6 0 0 0-5 9M3 12h10M8 4l4 7H4zM8 0v4M1 13h3M12 13h3" /></Ico></Cell>
        <Drop />
        <Cell on w="w-6"><span className="flex items-start"><ScaleMark className="size-[15px]" /><Ico className="-ml-1 size-1.5" box={6}><circle cx="3" cy="3" r="2.500" /></Ico></span></Cell>
        <Cell on><span className="flex items-start"><ScaleMark className="size-[15px]" /><Ico className="-ml-1 size-1.5" box={6}><path d="M4 0L1 3h3L2 6" /></Ico></span></Cell>
        <Cell><ScaleMark className="size-[15px]" /></Cell>
        <button className="flex h-[22px] shrink-0 items-center gap-1 border-r border-[#262d37] px-[3px] text-[11px]">1:1 / 100% <Caret className="w-[7px]" /></button>
        <Cell w="w-[22px]"><Settings className="size-4" strokeWidth={3} /></Cell>
        <Drop />
        <Cell w="w-[22px]"><Plus className="size-5" /></Cell>
        <Cell w="w-6"><Ico><path d="M5 1h6v14H5z" fill="currentColor" /><path d="M8 3h3M8 6h3M8 9h3M8 12h3" stroke="#3a4250" /></Ico></Cell>
        <span className="shrink-0 pl-1">小数</span>
        <div className="ml-auto flex items-center">
          <Cell><Ico><path d="M1 3h14v11H1zM4 6h8M4 9h8" /></Ico></Cell>
          <Cell w="w-10"><span className="h-4 w-2 bg-current" /></Cell>
          <Cell><Ico><path d="M4 14h8M5 14V8h6v6" /></Ico></Cell>
          <Cell on><Ico><circle cx="8" cy="8" r="6" /></Ico></Cell>
          <span className="w-2 shrink-0" />
          <Cell w="w-6"><Ico><path d="M1 2h14v12H1zM9 7l3-3M9 4h3v3M7 9l-3 3M4 9v3h3" /></Ico></Cell>
          <Cell w="w-6"><Menu className="size-[18px]" /></Cell>
        </div>
      </div>
    </div>
  );
}

function SogouLogo({ className }: { className: string }) {
  return (
    <svg viewBox="0 0 30 30" className={`shrink-0 ${className}`} aria-hidden="true">
      <rect x="2" y="2" width="26" height="26" rx="4" fill="#e85a25" transform="rotate(-9 15 15)" />
      <path d="M23 9c-5-3-14-2-14 2 0 5 14 2 13 8-1 4-10 5-15 2" fill="none" stroke="#fff" strokeWidth="4.500" />
    </svg>
  );
}

function ImeBar() {
  return (
    <div className="absolute right-[55px] bottom-[55px] flex h-6 w-[166px] items-center bg-white pr-1 text-[#1368ce]">
      <SogouLogo className="-mt-1 -ml-0.5 size-[31px]" />
      <div className="flex flex-1 items-center justify-between pl-1.5">
        <span className="text-sm leading-4 font-bold">中</span>
        <Ico className="size-3.5"><circle cx="4" cy="5" r="2" strokeWidth="1.500" /><path d="M12 8c1 2 0 4-2 5" strokeWidth="3" /></Ico>
        <Mic className="size-[15px] fill-current" />
        <Keyboard className="size-4" />
        <Shirt className="size-[15px] fill-current" />
        <Ico className="size-3.5"><path d="M1 4a3 3 0 0 1 6 0v3H4a3 3 0 0 1-3-3zM9 7V4a3 3 0 1 1 3 3zM1 12a3 3 0 0 1 3-3h3v3a3 3 0 0 1-6 0zM9 9h3a3 3 0 1 1-3 3z" fill="currentColor" stroke="none" /></Ico>
      </div>
    </div>
  );
}

const apps: { name: string; icon: ReactNode; mark?: string; bg?: string }[] = [
  { name: '任务视图', icon: <><path d="M1 7h15v15H1z" fill="#7d8085" /><path d="M7 2h16v14H7z" fill="#f2f4f6" /><path d="M7 7h9v9H7z" fill="#b6b9bd" /></> },
  { name: '文件资源管理器', mark: 'bg-[#8f9ab5]', icon: <><path d="M0 3h9l2 3h13v16H0z" fill="#e9b93c" /><path d="M0 8h24v14H0z" fill="#f9d55a" /><path d="M4 17h16v5H4z" fill="#1678c9" /></> },
  { name: 'AutoCAD', mark: 'bg-[#61c0f2] w-[15px]', bg: 'bg-[#233565]', icon: <><path d="M0 0h24v24H0z" fill="#fbe9e7" /><text x="4" y="19" fontSize="20" fontWeight="900" fontFamily="Lato" fill="#a92328">A</text></> },
  { name: 'AutoCAD 工具', icon: <><defs><linearGradient id="cad" x1="1" y1="0" x2="0" y2="1"><stop stopColor="#fbd6d2" /><stop offset=".6" stopColor="#e44b45" /><stop offset="1" stopColor="#c11d1d" /></linearGradient></defs><path d="M0 0h24v24H0z" fill="url(#cad)" /><path d="M12 2l7 14-7-3-7 3z" fill="#5a0c0c" /><path d="M12 2v11l-7 3z" fill="#c41818" /></> },
  { name: 'CAD 看图', icon: <><rect x="1" y="0" width="22" height="24" rx="2" fill="#e0195c" /><path d="M1 4h3v20H1z" fill="#8d1238" /><text x="8" y="14" fontSize="14" fontWeight="900" fontFamily="Lato" fill="#fff">A</text><text x="7" y="22" fontSize="6" fontWeight="900" fontFamily="Lato" fill="#fff">CAD</text></> },
  { name: 'Chrome', mark: 'bg-[#8f9ab5]', icon: <><circle cx="12" cy="12" r="12" fill="#34a853" /><path d="M12 12L1.600 6A12 12 0 0 1 22.400 6z" fill="#e5392f" /><path d="M12 12L22.400 6A12 12 0 0 1 12 24z" fill="#fbc116" /><circle cx="12" cy="12" r="6" fill="#fff" /><circle cx="12" cy="12" r="4.600" fill="#2f7be9" /></> },
  { name: 'SXG', mark: 'bg-[#8f9ab5]', icon: <><path d="M0 3h24v14H0z" fill="#f1f1f1" /><path d="M9 17h6v3h3v2H6v-2h3z" fill="#7c838c" /><text x="2" y="14" fontSize="10" fill="#333">S&gt;G</text></> },
  { name: '桌面助手', mark: 'bg-[#8f9ab5]', icon: <><path d="M6 5l3 3h6l3-3v9H6zM5 17h14v3H5z" fill="#24477c" /><circle cx="9" cy="11" r="1.200" fill="#7cb2df" /><circle cx="15" cy="11" r="1.200" fill="#7cb2df" /></> },
  { name: 'QQ音乐', mark: 'bg-[#8f9ab5]', icon: <><circle cx="12" cy="12" r="12" fill="#f8dc1e" /><path d="M7 3c5 2 9 1 11-2-1 5-3 7-6 8l4 7a5 5 0 1 1-5-4L8 7z" fill="#1eb56d" /></> },
  { name: 'Figma', mark: 'bg-[#8f9ab5]', icon: <><path d="M0 0h24v24H0z" fill="#252323" /><path d="M12 3v6H9a3 3 0 0 1 0-6z" fill="#f04f25" /><path d="M12 3h3a3 3 0 0 1 0 6h-3z" fill="#ff7566" /><path d="M12 9v6H9a3 3 0 0 1 0-6z" fill="#a259ff" /><circle cx="15" cy="12" r="3" fill="#25b7f7" /><path d="M12 15v3a3 3 0 1 1-3-3z" fill="#18cf83" /></> },
  { name: '向日葵', mark: 'bg-[#8f9ab5]', icon: <><rect width="24" height="24" rx="4" fill="#3b86f2" /><rect x="4" y="5" width="16" height="15" rx="3" fill="#fff" /><path d="M12 8v10M8 12l3-2h6" stroke="#2166c9" strokeWidth="2.200" fill="none" /></> },
  { name: 'Notion', mark: 'bg-[#8f9ab5]', icon: <><path d="M2 4l16-2 4 4v15l-16 2-4-4z" fill="#f2f2f2" stroke="#111" strokeWidth="1.500" /><path d="M6 8h15v14H6z" fill="#fff" stroke="#111" strokeWidth="1.200" /><text x="8" y="20" fontSize="14" fontWeight="700" fontFamily="Liberation Serif" fill="#111">N</text></> },
  { name: '企业微信', mark: 'bg-[#f19aa4]', bg: 'bg-[#452730]', icon: <><path d="M14 19a9 8 0 1 1 6-6M6 17l-2 4 5-2" fill="none" stroke="#2d8ae6" strokeWidth="2.800" /><circle cx="17" cy="17" r="2" fill="#fb6500" /><circle cx="21" cy="14" r="2" fill="#fdc817" /><circle cx="22" cy="19" r="1.800" fill="#2cb84f" /><circle cx="17" cy="22" r="1.800" fill="#fdc817" /></> },
  { name: 'SketchUp', mark: 'bg-[#8f9ab5]', icon: <><path d="M0 0h24v24H0z" fill="#eef4f9" /><path d="M4 9l9-5 7 4v9l-8 4M4 9l8 4v8M4 13l5 3M7 8l8 4v8M11 6l8 4" fill="none" stroke="#176ea8" strokeWidth="2" /></> },
  { name: '哔哩哔哩', mark: 'bg-[#8f9ab5]', icon: <><rect width="24" height="24" rx="5" fill="#f0649a" /><path d="M4 1h7v4H3z" fill="#fff" /><text x="4" y="15" fontSize="6" fontWeight="800" fill="#fff">bilibili</text></> },
  { name: 'Bandicam', mark: 'bg-[#8f9ab5]', icon: <><circle cx="12" cy="12" r="10.500" fill="#0c0c0c" stroke="#f0f0f0" strokeWidth="2" /><circle cx="12" cy="12" r="6" fill="#ed1818" /></> },
];

function Taskbar() {
  return (
    <footer className="flex h-[45px] shrink-0 items-center bg-linear-to-r from-[#1f2c38] from-25% via-[#11225a] via-50% to-[#1d2a36] to-80% text-[11px] text-white">
      <div className="flex w-[514px] shrink-0 items-center pl-[18px]">
        <div className="relative size-7">
          <svg viewBox="0 0 28 28" className="size-7" aria-hidden="true">
            <circle cx="13" cy="16" r="10" fill="#f39a2d" />
            <path d="M1 12a4 4 0 0 1 5-6 5 5 0 0 1 7 6z" fill="#cfe0fa" />
            <path d="M11 25a4 4 0 0 1 4-6 5 5 0 0 1 8 6z" fill="#dbe6fa" />
          </svg>
          <span className="absolute -top-0.5 right-0 size-3.5 rounded-full bg-[#f59aa5] text-center text-[10px] leading-[14px] text-[#222]">1</span>
        </div>
        <p className="ml-0.5 leading-[15px]">32℃<br />局部晴朗</p>
      </div>
      <button aria-label="开始" className="grid size-[22px] grid-cols-2 gap-px">
        <span className="bg-[#76d8fb]" /><span className="bg-[#5cc9f8]" /><span className="bg-[#4fc1f6]" /><span className="bg-[#27a5f0]" />
      </button>
      <label className="ml-3 flex h-[31px] w-[206px] shrink-0 items-center gap-2 rounded-full bg-[#344371] px-3">
        <Search className="size-4" />
        <input aria-label="搜索应用" placeholder="搜索" className="w-32 bg-transparent text-[13px] outline-none placeholder:text-[#cfd4e2]" />
      </label>
      <ul className="ml-[5px] flex gap-[3px]">
        {apps.map((a) => (
          <li key={a.name}>
            <button aria-label={a.name} className={`flex h-[38px] w-[38px] flex-col items-center rounded pt-[7px] ${a.bg ?? ''}`}>
              <svg viewBox="0 0 24 24" className="size-[23px]" aria-hidden="true">{a.icon}</svg>
              {a.mark && <span className={`mt-1 h-[3px] min-w-[5px] rounded-full ${a.mark}`} />}
            </button>
          </li>
        ))}
      </ul>
      <div className="ml-auto flex items-center pr-3.5">
        <ChevronUp className="size-4" />
        <Mic className="ml-3.5 size-4 text-[#8fd4d8]" />
        <span className="ml-4 text-[13px]">英</span>
        <SogouLogo className="ml-[21px] size-4" />
        <Wifi className="ml-[19px] size-4" />
        <Volume2 className="ml-1.5 size-[15px]" />
        <p className="ml-3 w-[52px] text-right leading-[15px] whitespace-nowrap">16:05<br />2023/8/4</p>
      </div>
    </footer>
  );
}

/* ---------- recorder and channel marks ---------- */

function LogoHalf() {
  return (
    <>
      <path d="M5 2l6 57" strokeWidth="9" />
      <ellipse cx="23" cy="46" rx="12" ry="9" strokeWidth="8" transform="rotate(12 23 46)" />
      <path d="M39 19l1 9M44 18l1 9" strokeWidth="2.500" />
      <path d="M42 32l2 25M65 32l1 26" strokeWidth="7" />
      <path d="M52 7l5 50" strokeWidth="7" />
      <path d="M60 19l1 9M65 18l1 9" strokeWidth="2.500" />
    </>
  );
}

function Marks() {
  return (
    <div className="pointer-events-none">
      <p className="absolute top-[3px] left-[813px] font-['DejaVu_Sans'] text-[26px] leading-8 font-bold whitespace-nowrap text-[#d9dadb] [font-variant:small-caps] [text-shadow:0_0_3px_#000,0_0_4px_#000]">
        www.BANDICAM.com
      </p>
      <div className="absolute top-9 right-9 flex items-center gap-4 text-[#cdced1]">
        <p className="pt-3 text-[37px] leading-none font-medium">一枚小阿壳</p>
        <svg viewBox="0 0 140 61" className="h-[61px] w-[140px]" fill="none" stroke="currentColor" role="img" aria-label="bilibili">
          <LogoHalf />
          <g transform="translate(71 0)"><LogoHalf /></g>
        </svg>
      </div>
    </div>
  );
}

export default function App() {
  return (
    <div className={`relative flex h-screen flex-col overflow-hidden bg-[#222a33] ${FONT}`}>
      <TitleBar />
      <MenuBar />
      <Ribbon />
      <FileTabs />
      <main className="relative flex-1 overflow-hidden bg-black">
        <span className="absolute top-0 left-[979px] h-56 w-px bg-[#343822]" />
        <span className="absolute top-[354px] left-[883px] h-px w-2 bg-[#bbb]" />
        <span className="absolute top-[618px] right-0 left-[1076px] h-px bg-[#4d1218]" />
        <ExportDialog />
        <LayerDialog />
        <ViewCube />
        <CommandLine />
      </main>
      <StatusBar />
      <Taskbar />
      <ImeBar />
      <Marks />
    </div>
  );
}
